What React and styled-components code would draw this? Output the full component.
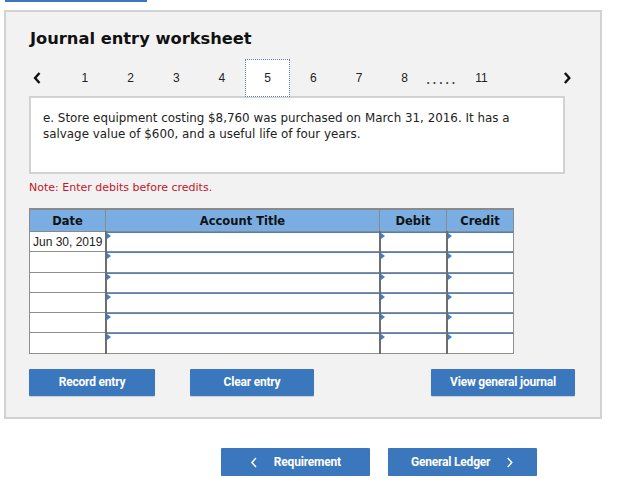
import React from 'react'
import styled, { createGlobalStyle } from 'styled-components'

const GlobalStyle = createGlobalStyle`
    body {
        margin: 0;
        background: #ffffff;
        font-family: "DejaVu Sans", Verdana, sans-serif;
    }
`

const pages = ['1', '2', '3', '4', '5', '6', '7', '8']
const rows = ['Jun 30, 2019', '', '', '', '', '']

const Chevron = ({ dir = 'left', size = 12, weight = 2.4, color = '#111' }) => (
    <svg width={size * 0.7} height={size} viewBox="0 0 7 12">
        <path
            d={dir === 'left' ? 'M5.8 1 L1.4 6 L5.8 11' : 'M1.2 1 L5.6 6 L1.2 11'}
            fill="none"
            stroke={color}
            strokeWidth={weight}
            strokeLinejoin="miter"
        />
    </svg>
)

export default function App() {
    return (
        <>
            <GlobalStyle />
            <TopTab />
            <Panel>
                <Title>Journal entry worksheet</Title>
                <Pager>
                    <PagerArrow><Chevron dir="left" /></PagerArrow>
                    {pages.map(p => (
                        <PageCell key={p} $active={p === '5'}>{p}</PageCell>
                    ))}
                    <Dots>.....</Dots>
                    <PageLast>11</PageLast>
                    <PagerArrow $right><Chevron dir="right" /></PagerArrow>
                </Pager>
                <Question>
                    e. Store equipment costing $8,760 was purchased on March 31, 2016. It has a
                    salvage value of $600, and a useful life of four years.
                </Question>
                <Note>Note: Enter debits before credits.</Note>
                <Journal>
                    <colgroup>
                        <col style={{ width: 76 }} />
                        <col style={{ width: 274 }} />
                        <col style={{ width: 67 }} />
                        <col style={{ width: 67 }} />
                    </colgroup>
                    <thead>
                        <tr>
                            <Head>Date</Head>
                            <Head>Account Title</Head>
                            <Head>Debit</Head>
                            <Head>Credit</Head>
                        </tr>
                    </thead>
                    <tbody>
                        {rows.map((d, i) => (
                            <tr key={i}>
                                <DateCell>{d}</DateCell>
                                <InputCell />
                                <InputCell />
                                <InputCell />
                            </tr>
                        ))}
                    </tbody>
                </Journal>
                <Actions>
                    <ActionButton $w={126}>Record entry</ActionButton>
                    <ActionButton $w={124} $ml={35}>Clear entry</ActionButton>
                    <ActionButton $w={144} $push>View general journal</ActionButton>
                </Actions>
            </Panel>
            <NavRow>
                <NavButton>
                    <Chevron dir="left" size={11} weight={1.6} color="#fff" />
                    <span>Requirement</span>
                </NavButton>
                <NavButton>
                    <span>General Ledger</span>
                    <Chevron dir="right" size={11} weight={1.6} color="#fff" />
                </NavButton>
            </NavRow>
        </>
    )
}

const TopTab = styled.div`
    width: 142px;
    height: 2px;
    margin-left: 5px;
    background-color: #3b77bc;
`

const Panel = styled.div`
    box-sizing: border-box;
    width: 598px;
    height: 409px;
    margin: 8px 0 0 4px;
    padding: 17px 0 0 23px;
    background-color: #f2f2f2;
    border: 2px solid #d2d2d2;
`

const Title = styled.h1`
    margin: 0 0 0 1px;
    font-size: 16.3px;
    line-height: 20px;
    font-weight: bold;
    color: #111;
`

const Pager = styled.div`
    display: flex;
    align-items: center;
    width: 546px;
    height: 38px;
    margin-top: 10px;
    font-family: "Liberation Sans", Arial, sans-serif;
    font-size: 12px;
    color: #222;
`

const PagerArrow = styled.div`
    display: flex;
    align-items: center;
    width: 33px;
    padding-left: ${props => props.$right ? '0' : '4px'};
    margin-left: ${props => props.$right ? 'auto' : '0'};
    justify-content: ${props => props.$right ? 'flex-end' : 'flex-start'};
    padding-right: ${props => props.$right ? '4px' : '0'};
    box-sizing: border-box;
`

const PageCell = styled.div`
    box-sizing: border-box;
    width: 45.7px;
    height: 38px;
    display: flex;
    align-items: center;
    justify-content: center;
    background-color: ${props => props.$active ? '#ffffff' : 'transparent'};
    border: 1px ${props => props.$active ? 'dotted #5d7fa8' : 'solid transparent'};
    position: relative;
    z-index: 1;
`

const Dots = styled.div`
    margin-left: -1px;
    margin-top: 3px;
    font-weight: bold;
    letter-spacing: 3px;
    color: #444;
`

const PageLast = styled.div`
    margin-left: 17px;
`

const Question = styled.div`
    box-sizing: border-box;
    width: 536px;
    height: 78px;
    margin-top: -1px;
    padding: 12px 40px 0 12px;
    background-color: #ffffff;
    border: 2px solid #d2d2d2;
    font-size: 11.9px;
    line-height: 16px;
    color: #222;
`

const Note = styled.div`
    margin-top: 6px;
    font-size: 11px;
    line-height: 16px;
    color: #c4142a;
`

const Journal = styled.table`
    margin-top: 12px;
    width: 484px;
    table-layout: fixed;
    border-collapse: collapse;
    background-color: #ffffff;
`

const Head = styled.th`
    height: 21px;
    padding: 0;
    background-color: #7aaee2;
    border: 1px solid #8a8a8a;
    border-top-width: 2px;
    font-size: 11.5px;
    font-weight: bold;
    color: #111;
    text-align: center;
`

const DateCell = styled.td`
    height: 19.3px;
    padding: 0 0 0 3px;
    border: 1px solid #8f8f8f;
    border-top-color: #a8a8a8;
    font-family: "Liberation Sans", Arial, sans-serif;
    font-size: 12px;
    color: #222;
    white-space: nowrap;
`

const InputCell = styled.td`
    position: relative;
    height: 19.3px;
    padding: 0;
    border: 1px solid #8f8f8f;
    border-left: 2px solid #6e6e6e;
    box-shadow: inset 0 1px 0 #4d80c2;
    &::before {
        content: '';
        position: absolute;
        left: 0;
        top: 1px;
        border-left: 4px solid #3d7fd0;
        border-top: 3px solid transparent;
        border-bottom: 3px solid transparent;
    }
`

const Actions = styled.div`
    display: flex;
    width: 546px;
    margin-top: 15px;
`

const ActionButton = styled.button`
    box-sizing: border-box;
    width: ${props => props.$w}px;
    height: 27px;
    margin-left: ${props => props.$push ? 'auto' : (props.$ml || 0) + 'px'};
    padding: 0;
    border: none;
    border-radius: 1px;
    background-color: #3b77bc;
    box-shadow: 0 1px 1px rgba(0, 0, 0, 0.15);
    color: #ffffff;
    font-family: Roboto, "Liberation Sans", sans-serif;
    font-size: 12px;
    font-weight: bold;
    letter-spacing: -0.2px;
`

const NavRow = styled.div`
    display: flex;
    gap: 18px;
    margin-top: 29px;
    padding-left: 221px;
`

const NavButton = styled.button`
    display: flex;
    align-items: center;
    justify-content: center;
    gap: 16px;
    width: 149px;
    height: 28px;
    padding: 0;
    border: none;
    border-radius: 1px;
    background-color: #3b77bc;
    box-shadow: 0 1px 1px rgba(0, 0, 0, 0.15);
    color: #ffffff;
    font-family: Roboto, "Liberation Sans", sans-serif;
    font-size: 12px;
    font-weight: bold;
    letter-spacing: -0.2px;
`
